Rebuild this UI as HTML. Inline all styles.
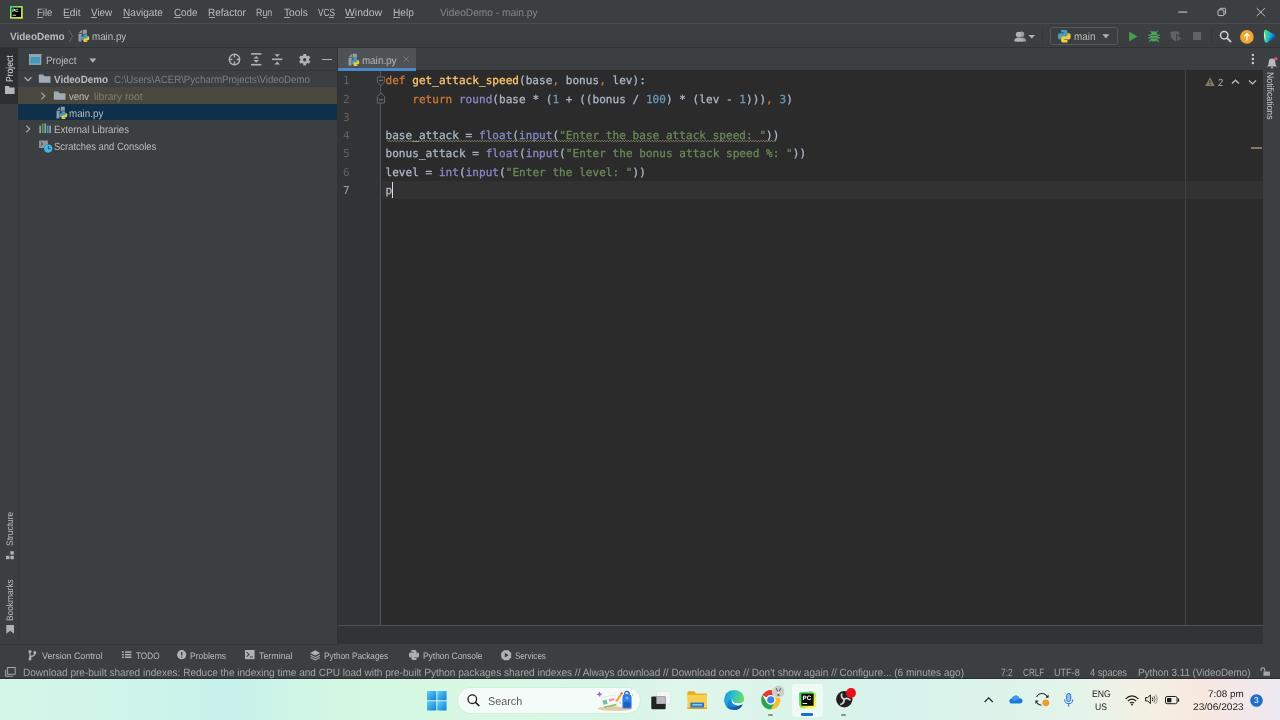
<!DOCTYPE html>
<html lang="en">
<head>
<meta charset="utf-8">
<title>VideoDemo - main.py</title>
<style>
html,body{margin:0;padding:0}
body{width:1280px;height:720px;position:relative;overflow:hidden;background:#3c3f41;font-family:"Liberation Sans",sans-serif;text-rendering:geometricPrecision}
.b{position:absolute}
.t{position:absolute;white-space:pre;display:block;transform-origin:0 0}
svg{position:absolute;overflow:visible}
.code{position:absolute;left:385.5px;white-space:pre;font:400 11.04px/18px "DejaVu Sans Mono","Liberation Mono",monospace;color:#a9b7c6;letter-spacing:0.034px;height:18px;-webkit-text-stroke:0.3px}
.us{position:relative;top:-1.6px}
u{text-decoration:underline;text-decoration-thickness:0.8px;text-underline-offset:1.2px;text-decoration-color:#9a9c9e}
.k{color:#cc7832}.f{color:#ffc66d}.bi{color:#8888c6}.n{color:#6897bb}.s{color:#6a8759}
.ln{position:absolute;left:343px;font:400 11.04px/18px "DejaVu Sans Mono","Liberation Mono",monospace;color:#606366;height:18px}
</style>
</head>
<body>
<div id="root" style="position:absolute;left:0;top:0;width:1280px;height:720px;will-change:transform">
<!-- menu + nav separators -->
<div class="b" style="left:0;top:23px;width:1280px;height:1px;background:#4b4e50"></div>
<div class="b" style="left:0;top:47px;width:1280px;height:1px;background:#323232"></div>

<!-- left stripe -->
<div class="b" style="left:0;top:48px;width:18px;height:56px;background:#2d2f30"></div>
<div class="b" style="left:17.5px;top:48px;width:1px;height:597px;background:#37393b"></div>

<!-- project panel -->
<div class="b" style="left:18px;top:70px;width:320px;height:1px;background:#35383a"></div>
<div class="b" style="left:18px;top:87px;width:319.5px;height:16.7px;background:#4a483e"></div>
<div class="b" style="left:18px;top:103.7px;width:319.5px;height:16.8px;background:#0e304a"></div>
<div class="b" style="left:337.3px;top:48px;width:1px;height:597px;background:#323232"></div>

<!-- editor tabs -->
<div class="b" style="left:338px;top:47.6px;width:78.2px;height:22.7px;background:#4e5254"></div>

<!-- editor -->
<div class="b" style="left:338px;top:70.3px;width:925px;height:555.2px;background:#2b2b2b"></div>
<div class="b" style="left:338px;top:70.3px;width:43px;height:555.2px;background:#313335"></div>
<div class="b" style="left:380.3px;top:70.3px;width:1px;height:555.2px;background:#555555"></div>
<div class="b" style="left:381.5px;top:181px;width:881.5px;height:18.3px;background:#323232"></div>
<div class="b" style="left:1185px;top:70.3px;width:1px;height:555.2px;background:#424242"></div>
<div class="b" style="left:338px;top:625.3px;width:925px;height:1px;background:#4f5153"></div>
<div class="b" style="left:338px;top:626.3px;width:925px;height:18px;background:#313335"></div>
<div class="b" style="left:338px;top:67.6px;width:78.2px;height:3px;background:#4a88c7"></div>
<!-- right stripe -->
<div class="b" style="left:1263px;top:48px;width:17px;height:597px;background:#3c3f41"></div>
<!-- error stripe mark -->
<div class="b" style="left:1250.5px;top:147px;width:11.5px;height:2.4px;background:#857a5e"></div>

<!-- code -->
<div class="ln" style="top:72px;color:#606366">1</div>
<div class="code" style="top:72px"><span class="k">def </span><span class="f">get_attack_speed</span>(base<span class="k">,</span> bonus<span class="k">,</span> lev):</div>
<div class="ln" style="top:91px;color:#606366">2</div>
<div class="code" style="top:91px">    <span class="k">return </span><span class="bi">round</span>(base * (<span class="n">1</span> + ((bonus / <span class="n">100</span>) * (lev - <span class="n">1</span>)))<span class="k">,</span> <span class="n">3</span>)</div>
<div class="ln" style="top:109px;color:#606366">3</div>
<div class="ln" style="top:127px;color:#606366">4</div>
<div class="code" style="top:127px"><span class="wv">base_attack = <span class="bi">float</span>(<span class="bi">input</span>(<span class="s">"Enter the base attack speed: "</span>))</span></div>
<div class="ln" style="top:145px;color:#606366">5</div>
<div class="code" style="top:145px">bonus_attack = <span class="bi">float</span>(<span class="bi">input</span>(<span class="s">"Enter the bonus attack speed %: "</span>))</div>
<div class="ln" style="top:164px;color:#606366">6</div>
<div class="code" style="top:164px">level = <span class="bi">int</span>(<span class="bi">input</span>(<span class="s">"Enter the level: "</span>))</div>
<div class="ln" style="top:182px;color:#a4a3a3">7</div>
<div class="code" style="top:182px">p</div>

<!-- bottom tool stripe / status bar -->
<div class="b" style="left:0;top:644.3px;width:1280px;height:35px;background:#3c3f41"></div>

<div class="b" style="left:0;top:643.8px;width:338px;height:1px;background:#323537"></div>
<div class="b" style="left:0;top:678.4px;width:1280px;height:1px;background:#2a2c2d"></div>
<!-- taskbar -->
<div class="b" style="left:0;top:679.4px;width:1280px;height:40.6px;background:linear-gradient(90deg,#d3f6e8 0%,#d0f5e9 8%,#c9f1ec 18%,#d3f8e2 27%,#d9f8e3 38%,#d6f5e6 48%,#dff6ea 53%,#dbf4ea 62%,#d8f3ec 70%,#dcf4eb 77%,#e4f4ea 84%,#f3f1e4 89%,#f8e8e0 94%,#f1e8ec 98%,#ece9f0 100%)"></div>
<div class="b" style="left:458px;top:687.5px;width:182px;height:25.3px;border-radius:13px;background:#f5fbf8;box-shadow:0 0 0 0.6px rgba(0,0,0,0.06)"></div>
<div class="b" style="left:791.5px;top:684px;width:31.3px;height:32.5px;border-radius:3px;background:rgba(255,255,255,0.55)"></div>

<svg style="left:10.4px;top:5.9px" width="12.7" height="12.7" viewBox="0 0 12.7 12.7" ><defs><linearGradient id="pcg" x1="0" y1="0" x2="1" y2="1"><stop offset="0" stop-color="#21d789"/><stop offset="0.45" stop-color="#a8ec4e"/><stop offset="1" stop-color="#fcf84a"/></linearGradient></defs><rect width="12.7" height="12.7" fill="url(#pcg)"/><rect x="1.6" y="1.6" width="9.5" height="9.5" fill="#000"/><text x="2.3" y="6.2" font-family="Liberation Sans, sans-serif" font-weight="700" font-size="4.6" fill="#fff">PC</text><rect x="2.5" y="8.8" width="3.6" height="0.8" fill="#fff"/></svg>
<svg style="left:1178px;top:7px" width="12" height="12" viewBox="0 0 12 12" ><path stroke="#c8c8c8" stroke-width="1.1" d="M0.3,5.05 H9.2"/></svg>
<svg style="left:1217px;top:7px" width="12" height="12" viewBox="0 0 12 12" ><rect x="1" y="2.9" width="5.9" height="5.7" rx="1" fill="none" stroke="#c8c8c8" stroke-width="0.95"/><path fill="none" stroke="#c8c8c8" stroke-width="0.95" d="M2.7,2.7 V2.2 Q2.7,1.3 3.6,1.3 H7.6 Q8.6,1.3 8.6,2.3 V6.2 Q8.6,7.1 7.7,7.1 H7.1"/></svg>
<svg style="left:1256px;top:7px" width="12" height="12" viewBox="0 0 12 12" ><path stroke="#c8c8c8" stroke-width="0.95" d="M0.7,1.2 L8.8,9 M8.8,1.2 L0.7,9"/></svg>
<svg style="left:66px;top:29px" width="10" height="14" viewBox="0 0 10 14" ><path fill="none" stroke="#6b6d6f" stroke-width="0.8" d="M3.2,1.6 L6.6,7.2 L3.2,12.9"/></svg>
<svg style="left:76.2px;top:29.4px" width="13.33" height="13.33" viewBox="0 0 16 16" ><polygon fill="#9aa7b0" fill-opacity=".9" points="7,1 3,5 7,5"/><path fill="#9aa7b0" fill-opacity=".9" d="M8,1 H13 V5.6 H9.6 Q6.6,5.6 6.6,8.6 V15 H3 V6 H8 Z"/><g transform="translate(6.6,6.4) scale(0.93)"><path fill="#479dc8" fill-opacity="1" d="M2.5,0 H6 Q7.5,0 7.5,1.5 V4 Q7.5,5 6.5,5 H3.5 Q2.5,5 2.5,6 V7.5 H1.5 Q0,7.5 0,6 V4 Q0,2.5 1.5,2.5 H5 V2 H2.5 Z"/><path fill="#ecd042" fill-opacity="1" d="M7.5,10 H4 Q2.5,10 2.5,8.5 V6 Q2.5,5 3.5,5 H6.5 Q7.5,5 7.5,4 V2.5 H8.5 Q10,2.5 10,4 V6 Q10,7.5 8.5,7.5 H5 V8 H7.5 Z"/></g></svg>
<svg style="left:1013px;top:29px" width="24" height="14" viewBox="0 0 24 14" ><g fill="#9a9c9e"><circle cx="8.6" cy="5.2" r="2.7"/><path d="M3.6,12.4 Q3.6,8.4 8.6,8.4 Q13.2,8.4 13.2,12.4 Z"/></g><g fill="#afb1b3"><circle cx="5.6" cy="5.6" r="2.8"/><path d="M1.2,12.4 Q1.2,8.8 5.6,8.8 Q10.4,8.8 10.4,12.4 Z"/><path d="M15.4,6 H22 L18.7,9.6 Z"/></g></svg>
<div class="b" style="left:1042.3px;top:28px;width:1px;height:16px;background:#35383a"></div>
<div class="b" style="left:1050.3px;top:27.3px;width:65.6px;height:16.2px;border:0.8px solid #56595b;border-radius:2.5px"></div>
<svg style="left:1058px;top:29.8px" width="12.6" height="12.6" viewBox="0 0 10 10" ><g transform="translate(0,0) scale(1)"><path fill="#479dc8" fill-opacity="1" d="M2.5,0 H6 Q7.5,0 7.5,1.5 V4 Q7.5,5 6.5,5 H3.5 Q2.5,5 2.5,6 V7.5 H1.5 Q0,7.5 0,6 V4 Q0,2.5 1.5,2.5 H5 V2 H2.5 Z"/><path fill="#ecd042" fill-opacity="1" d="M7.5,10 H4 Q2.5,10 2.5,8.5 V6 Q2.5,5 3.5,5 H6.5 Q7.5,5 7.5,4 V2.5 H8.5 Q10,2.5 10,4 V6 Q10,7.5 8.5,7.5 H5 V8 H7.5 Z"/></g></svg>
<svg style="left:1102px;top:33px" width="8" height="7" viewBox="0 0 8 7" ><path fill="#afb1b3" d="M0.4,1.2 H7.4 L3.9,5.6 Z"/></svg>
<svg style="left:1128px;top:30px" width="11" height="13" viewBox="0 0 11 13" ><path fill="#499c54" d="M1.2,1.4 L9.4,6.4 L1.2,11.4 Z"/></svg>
<svg style="left:1148px;top:30px" width="12" height="12" viewBox="0 0 12 12" ><g fill="#4fa65d"><ellipse cx="6" cy="7" rx="3.9" ry="4.5"/><path d="M3.3,3.4 Q3.5,1.3 6,1.3 Q8.5,1.3 8.7,3.4 Z"/><path d="M2.6,0.6 L4.6,2.4 L3.8,3 L1.9,1.2 Z M9.4,0.6 L7.4,2.4 L8.2,3 L10.1,1.2 Z"/><rect x="0.4" y="4.6" width="11.2" height="1.3"/><rect x="0.2" y="7.2" width="11.6" height="1.3"/><path d="M0.8,11.2 L3,9 L3.9,9.8 L1.7,12 Z M11.2,11.2 L9,9 L8.1,9.8 L10.3,12 Z"/></g><path stroke="#3c3f41" stroke-width="0.8" stroke-opacity=".8" d="M3,5.5 H9 M2.6,8.3 H9.4"/></svg>
<svg style="left:1169px;top:30px" width="14" height="13" viewBox="0 0 14 13" ><path fill="#606365" d="M1.6,1.6 Q4,1.9 6,0.9 Q8,1.9 10.2,1.6 V5.4 L7,3.6 V11.2 Q2.6,9.6 1.6,6 Z"/><path fill="#5a5d5f" d="M7.8,5.2 L12.8,8.4 L7.8,11.6 Z"/></svg>
<div class="b" style="left:1193px;top:32px;width:8.4px;height:8.4px;background:#616365"></div>
<div class="b" style="left:1210.5px;top:28px;width:1px;height:16px;background:#34373a"></div>
<svg style="left:1219px;top:30px" width="13" height="13" viewBox="0 0 13 13" ><circle cx="5.2" cy="5.2" r="3.7" fill="none" stroke="#d0d0d0" stroke-width="1.5"/><path stroke="#d0d0d0" stroke-width="1.9" stroke-linecap="round" d="M8.1,8.1 L11.6,11.6"/></svg>
<svg style="left:1240.2px;top:29.8px" width="14" height="14" viewBox="0 0 14 14" ><circle cx="6.9" cy="6.9" r="6.8" fill="#f0a732"/><path fill="none" stroke="#fff" stroke-width="1.3" d="M6.9,10.6 V3.8 M4.2,6.4 L6.9,3.6 L9.6,6.4"/></svg>
<svg style="left:1262.6px;top:29px" width="13" height="14.4" viewBox="0 0 13 14.4" ><defs><linearGradient id="cwm" x1="0" y1="0" x2="1" y2="0.25"><stop offset="0" stop-color="#54e36a"/><stop offset="0.45" stop-color="#23c9ae"/><stop offset="1" stop-color="#0a6ff0"/></linearGradient></defs><path fill="#1d1f20" d="M0.6,0.6 L3,0.2 L2,2.4 Z"/><path fill="url(#cwm)" d="M1.3,1.4 Q1.8,0.1 3.4,0.9 L11.4,5.7 Q12.9,6.9 11.6,8.2 L4.3,13.4 Q2.6,14.3 1.8,12.8 Q0.3,7 1.3,1.4 Z"/><path fill="#0b62d6" fill-opacity="0.8" d="M4.3,13.4 L11.6,8.2 Q12.6,7.2 11.9,6.2 L6.8,10 Z"/><path fill="#d9f8df" fill-opacity="0.9" d="M1.4,2.2 Q3.4,7 2,12.6 Q0.4,7 1.4,2.2 Z"/></svg>
<svg style="left:4.6px;top:86.2px" width="9.6" height="8" viewBox="0 0 9.6 8" ><path fill="#b4b6b8" d="M0,0 H3.8 L4.8,1.5 H9.6 V8 H0 Z"/></svg>
<svg style="left:6px;top:551px" width="8.4" height="9" viewBox="0 0 8.4 9" ><g fill="#afb1b3"><rect x="4.4" y="0.2" width="3.4" height="3.4"/><rect x="0" y="4.8" width="3.4" height="3.4"/><rect x="4.4" y="4.8" width="3.4" height="3.4"/></g></svg>
<svg style="left:5.6px;top:625px" width="8.4" height="9" viewBox="0 0 8.4 9" ><path fill="#afb1b3" d="M0.3,0 H8 V8.8 L4.15,5.8 L0.3,8.8 Z"/></svg>
<svg style="left:29.1px;top:54.2px" width="12.3" height="10.9" viewBox="0 0 12.3 10.9" ><rect x="0.7" y="0.7" width="10.9" height="9.5" fill="#3d9cbf" stroke="#97a3ab" stroke-width="1.4"/><rect x="0" y="0" width="12.3" height="3" fill="#97a3ab"/></svg>
<svg style="left:89px;top:57.5px" width="8" height="6" viewBox="0 0 8 6" ><path fill="#afb1b3" d="M0.3,0.6 H7.3 L3.8,4.8 Z"/></svg>
<svg style="left:227.5px;top:52.7px" width="13" height="13" viewBox="0 0 13 13" ><g fill="none" stroke="#afb1b3" stroke-width="1.45"><circle cx="6.5" cy="6.5" r="5.2"/><path d="M6.5,1 V4.4 M6.5,8.6 V12 M1,6.5 H4.4 M8.6,6.5 H12"/></g></svg>
<svg style="left:251px;top:53px" width="10.4" height="12.6" viewBox="0 0 10.4 12.6" ><g fill="#afb1b3"><rect x="0" y="0.1" width="10.4" height="1.6"/><rect x="0" y="10.9" width="10.4" height="1.6"/><path d="M5.2,2.9 L8,5.6 H2.4 Z"/><path d="M5.2,9.7 L8,7 H2.4 Z"/></g></svg>
<svg style="left:272px;top:53px" width="10.4" height="12.6" viewBox="0 0 10.4 12.6" ><g fill="#afb1b3"><rect x="0" y="5.5" width="10.4" height="1.6"/><path d="M5.2,3.9 L8,1.2 H2.4 Z"/><path d="M5.2,8.6 L8,11.4 H2.4 Z"/></g></svg>
<svg style="left:299.4px;top:53.8px" width="11.4" height="11.4" viewBox="-5.7 -5.7 11.4 11.4" ><g fill="#afb1b3"><rect x="-1.45" y="-5.7" width="2.9" height="3" transform="rotate(0)"/><rect x="-1.45" y="-5.7" width="2.9" height="3" transform="rotate(60)"/><rect x="-1.45" y="-5.7" width="2.9" height="3" transform="rotate(120)"/><rect x="-1.45" y="-5.7" width="2.9" height="3" transform="rotate(180)"/><rect x="-1.45" y="-5.7" width="2.9" height="3" transform="rotate(240)"/><rect x="-1.45" y="-5.7" width="2.9" height="3" transform="rotate(300)"/></g><circle r="3.05" fill="none" stroke="#afb1b3" stroke-width="2.7"/></svg>
<div class="b" style="left:321.7px;top:58.5px;width:10.3px;height:1.5px;background:#afb1b3"></div>
<svg style="left:23px;top:74px" width="10" height="10" viewBox="-5 -5 10 10" ><path fill="none" stroke="#a4a6a8" stroke-width="1.25" d="M-3.5,-1.8 L0,1.8 L3.5,-1.8"/></svg>
<svg style="left:38.2px;top:72.2px" width="13.33" height="13.33" viewBox="0 0 16 16" ><path fill="#a1abb3" fill-opacity="1" d="M1,3 H6.3 L7.8,5 H15 V13 H1 Z"/></svg>
<svg style="left:38px;top:90.6px" width="10" height="10" viewBox="-5 -5 10 10" ><path fill="none" stroke="#a4a6a8" stroke-width="1.25" d="M-1.8,-3.4 L1.7,0 L-1.8,3.4"/></svg>
<svg style="left:53.3px;top:88.9px" width="13.33" height="13.33" viewBox="0 0 16 16" ><path fill="#a1abb3" fill-opacity="1" d="M1,3 H6.3 L7.8,5 H15 V13 H1 Z"/></svg>
<svg style="left:53.7px;top:105.8px" width="13.33" height="13.33" viewBox="0 0 16 16" ><polygon fill="#9aa7b0" fill-opacity=".9" points="7,1 3,5 7,5"/><path fill="#9aa7b0" fill-opacity=".9" d="M8,1 H13 V5.6 H9.6 Q6.6,5.6 6.6,8.6 V15 H3 V6 H8 Z"/><g transform="translate(6.6,6.4) scale(0.93)"><path fill="#479dc8" fill-opacity="1" d="M2.5,0 H6 Q7.5,0 7.5,1.5 V4 Q7.5,5 6.5,5 H3.5 Q2.5,5 2.5,6 V7.5 H1.5 Q0,7.5 0,6 V4 Q0,2.5 1.5,2.5 H5 V2 H2.5 Z"/><path fill="#ecd042" fill-opacity="1" d="M7.5,10 H4 Q2.5,10 2.5,8.5 V6 Q2.5,5 3.5,5 H6.5 Q7.5,5 7.5,4 V2.5 H8.5 Q10,2.5 10,4 V6 Q10,7.5 8.5,7.5 H5 V8 H7.5 Z"/></g></svg>
<svg style="left:22.6px;top:124px" width="10" height="10" viewBox="-5 -5 10 10" ><path fill="none" stroke="#a4a6a8" stroke-width="1.25" d="M-1.8,-3.4 L1.7,0 L-1.8,3.4"/></svg>
<svg style="left:39px;top:123.4px" width="12.2" height="10.6" viewBox="0 0 13 11" ><g><rect x="0.4" y="2.6" width="1.7" height="8" fill="#9aa7b0"/><rect x="3.1" y="0.4" width="1.7" height="10.2" fill="#62b543" fill-opacity=".8"/><rect x="5.8" y="0.4" width="1.7" height="10.2" fill="#9aa7b0"/><rect x="8.4" y="2.6" width="1.7" height="8" fill="#40b6e0" fill-opacity=".8"/><rect x="11" y="2.6" width="1.7" height="8" fill="#9aa7b0"/></g></svg>
<svg style="left:39px;top:139.5px" width="14" height="13" viewBox="0 0 14 13" ><path fill="#9aa7b0" fill-opacity=".85" d="M0.1,0.5 H8.9 V4.6 Q5.6,4.8 5,8 H0.1 Z"/><path fill="none" stroke="#3c3f41" stroke-width="0.9" d="M1.6,2.2 L3.8,4 L1.6,5.8"/><circle cx="9.2" cy="8.6" r="4.1" fill="#40b6e0"/><path fill="none" stroke="#2b4a5a" stroke-width="0.9" d="M9.4,6 V8.8 H11.6"/></svg>
<svg style="left:345.5px;top:52.7px" width="13.33" height="13.33" viewBox="0 0 16 16" ><polygon fill="#9aa7b0" fill-opacity=".9" points="7,1 3,5 7,5"/><path fill="#9aa7b0" fill-opacity=".9" d="M8,1 H13 V5.6 H9.6 Q6.6,5.6 6.6,8.6 V15 H3 V6 H8 Z"/><g transform="translate(6.6,6.4) scale(0.93)"><path fill="#479dc8" fill-opacity="1" d="M2.5,0 H6 Q7.5,0 7.5,1.5 V4 Q7.5,5 6.5,5 H3.5 Q2.5,5 2.5,6 V7.5 H1.5 Q0,7.5 0,6 V4 Q0,2.5 1.5,2.5 H5 V2 H2.5 Z"/><path fill="#ecd042" fill-opacity="1" d="M7.5,10 H4 Q2.5,10 2.5,8.5 V6 Q2.5,5 3.5,5 H6.5 Q7.5,5 7.5,4 V2.5 H8.5 Q10,2.5 10,4 V6 Q10,7.5 8.5,7.5 H5 V8 H7.5 Z"/></g></svg>
<svg style="left:403px;top:56.4px" width="7" height="7" viewBox="0 0 7 7" ><path stroke="#7b7e80" stroke-width="0.85" d="M0.5,0.5 L5.9,5.9 M5.9,0.5 L0.5,5.9"/></svg>
<svg style="left:1250.7px;top:53.0px" width="4" height="11" viewBox="0 0 4 11" ><g fill="#c4c6c8"><circle cx="1.9" cy="2" r="1.25"/><circle cx="1.9" cy="6" r="1.25"/><circle cx="1.9" cy="9.9" r="1.25"/></g></svg>
<svg style="left:375.5px;top:75px" width="10" height="32" viewBox="0 0 10 32" ><path fill="#2d2e30" stroke="#74777a" stroke-width="0.8" d="M1.4,1.9 H8.6 V6.9 L5,10.7 L1.4,6.9 Z"/><path stroke="#8a8d8f" stroke-width="0.9" d="M2.9,5.3 H7.1"/><path fill="#2d2e30" stroke="#74777a" stroke-width="0.8" d="M5,17.8 L8.6,21.5 V28 H1.4 V21.5 Z"/><path stroke="#8a8d8f" stroke-width="0.9" d="M2.9,24.8 H7.1"/></svg>
<div class="b" style="left:391.5px;top:182px;width:1.6px;height:15.8px;background:#dcdcdc"></div>
<svg style="left:385.5px;top:140.4px" width="392" height="2.2" viewBox="0 0 392 2.2" ><polyline fill="none" stroke="#a09c72" stroke-width="0.75" points="0.00,0.35 1.33,1.75 2.67,0.35 4.00,1.75 5.33,0.35 6.67,1.75 8.00,0.35 9.33,1.75 10.67,0.35 12.00,1.75 13.33,0.35 14.67,1.75 16.00,0.35 17.33,1.75 18.67,0.35 20.00,1.75 21.33,0.35 22.67,1.75 24.00,0.35 25.33,1.75 26.67,0.35 28.00,1.75 29.33,0.35 30.67,1.75 32.00,0.35 33.33,1.75 34.67,0.35 36.00,1.75 37.33,0.35 38.67,1.75 40.00,0.35 41.33,1.75 42.67,0.35 44.00,1.75 45.33,0.35 46.67,1.75 48.00,0.35 49.33,1.75 50.67,0.35 52.00,1.75 53.33,0.35 54.67,1.75 56.00,0.35 57.33,1.75 58.67,0.35 60.00,1.75 61.33,0.35 62.67,1.75 64.00,0.35 65.33,1.75 66.67,0.35 68.00,1.75 69.33,0.35 70.66,1.75 72.00,0.35 73.33,1.75 74.66,0.35 76.00,1.75 77.33,0.35 78.66,1.75 80.00,0.35 81.33,1.75 82.66,0.35 84.00,1.75 85.33,0.35 86.66,1.75 88.00,0.35 89.33,1.75 90.66,0.35 92.00,1.75 93.33,0.35 94.66,1.75 96.00,0.35 97.33,1.75 98.66,0.35 100.00,1.75 101.33,0.35 102.66,1.75 104.00,0.35 105.33,1.75 106.66,0.35 108.00,1.75 109.33,0.35 110.66,1.75 112.00,0.35 113.33,1.75 114.66,0.35 116.00,1.75 117.33,0.35 118.66,1.75 120.00,0.35 121.33,1.75 122.66,0.35 124.00,1.75 125.33,0.35 126.66,1.75 128.00,0.35 129.33,1.75 130.66,0.35 132.00,1.75 133.33,0.35 134.66,1.75 136.00,0.35 137.33,1.75 138.66,0.35 140.00,1.75 141.33,0.35 142.66,1.75 144.00,0.35 145.33,1.75 146.66,0.35 148.00,1.75 149.33,0.35 150.66,1.75 152.00,0.35 153.33,1.75 154.66,0.35 156.00,1.75 157.33,0.35 158.66,1.75 160.00,0.35 161.33,1.75 162.66,0.35 164.00,1.75 165.33,0.35 166.66,1.75 168.00,0.35 169.33,1.75 170.66,0.35 172.00,1.75 173.33,0.35 174.66,1.75 176.00,0.35 177.33,1.75 178.66,0.35 180.00,1.75 181.33,0.35 182.66,1.75 184.00,0.35 185.33,1.75 186.66,0.35 188.00,1.75 189.33,0.35 190.66,1.75 192.00,0.35 193.33,1.75 194.66,0.35 196.00,1.75 197.33,0.35 198.66,1.75 200.00,0.35 201.33,1.75 202.66,0.35 203.99,1.75 205.33,0.35 206.66,1.75 207.99,0.35 209.33,1.75 210.66,0.35 211.99,1.75 213.33,0.35 214.66,1.75 215.99,0.35 217.33,1.75 218.66,0.35 219.99,1.75 221.33,0.35 222.66,1.75 223.99,0.35 225.33,1.75 226.66,0.35 227.99,1.75 229.33,0.35 230.66,1.75 231.99,0.35 233.33,1.75 234.66,0.35 235.99,1.75 237.33,0.35 238.66,1.75 239.99,0.35 241.33,1.75 242.66,0.35 243.99,1.75 245.33,0.35 246.66,1.75 247.99,0.35 249.33,1.75 250.66,0.35 251.99,1.75 253.33,0.35 254.66,1.75 255.99,0.35 257.33,1.75 258.66,0.35 259.99,1.75 261.33,0.35 262.66,1.75 263.99,0.35 265.33,1.75 266.66,0.35 267.99,1.75 269.33,0.35 270.66,1.75 271.99,0.35 273.33,1.75 274.66,0.35 275.99,1.75 277.33,0.35 278.66,1.75 279.99,0.35 281.33,1.75 282.66,0.35 283.99,1.75 285.33,0.35 286.66,1.75 287.99,0.35 289.33,1.75 290.66,0.35 291.99,1.75 293.33,0.35 294.66,1.75 295.99,0.35 297.33,1.75 298.66,0.35 299.99,1.75 301.33,0.35 302.66,1.75 303.99,0.35 305.33,1.75 306.66,0.35 307.99,1.75 309.33,0.35 310.66,1.75 311.99,0.35 313.33,1.75 314.66,0.35 315.99,1.75 317.33,0.35 318.66,1.75 319.99,0.35 321.33,1.75 322.66,0.35 323.99,1.75 325.33,0.35 326.66,1.75 327.99,0.35 329.33,1.75 330.66,0.35 331.99,1.75 333.33,0.35 334.66,1.75 335.99,0.35 337.32,1.75 338.66,0.35 339.99,1.75 341.32,0.35 342.66,1.75 343.99,0.35 345.32,1.75 346.66,0.35 347.99,1.75 349.32,0.35 350.66,1.75 351.99,0.35 353.32,1.75 354.66,0.35 355.99,1.75 357.32,0.35 358.66,1.75 359.99,0.35 361.32,1.75 362.66,0.35 363.99,1.75 365.32,0.35 366.66,1.75 367.99,0.35 369.32,1.75 370.66,0.35 371.99,1.75 373.32,0.35 374.66,1.75 375.99,0.35 377.32,1.75 378.66,0.35 379.99,1.75 381.32,0.35 382.66,1.75 383.99,0.35 385.32,1.75 386.66,0.35 387.99,1.75 389.32,0.35 390.66,1.75"/></svg>
<svg style="left:1204.8px;top:77px" width="10" height="9.4" viewBox="0 0 10 9.4" ><path fill="#857c5e" d="M5,0.3 L9.8,9 H0.2 Z"/><path stroke="#2b2b2b" stroke-width="1.1" d="M5,3.2 V6.2 M5,7 V8.1"/></svg>
<svg style="left:1230.9px;top:78.3px" width="9" height="8" viewBox="0 0 9 8" ><path fill="none" stroke="#b9bbbd" stroke-width="1.35" d="M1,5.6 L4.5,2.2 L8,5.6"/></svg>
<svg style="left:1248.2px;top:78.1px" width="9" height="8" viewBox="0 0 9 8" ><path fill="none" stroke="#b9bbbd" stroke-width="1.35" d="M1,2.4 L4.5,5.9 L8,2.4"/></svg>
<svg style="left:1266.8px;top:57px" width="11" height="12" viewBox="0 0 11 12" ><path fill="#b8babc" d="M5,1.4 Q8.3,1.6 8.3,5.4 Q8.3,7.8 9.8,9 V9.6 H0.2 V9 Q1.7,7.8 1.7,5.4 Q1.7,1.6 5,1.4 Z"/><rect x="4" y="10.2" width="2" height="1.2" fill="#b8babc"/><circle cx="8.8" cy="1.8" r="1.7" fill="#dc566a"/></svg>
<svg style="left:28px;top:649.6px" width="9" height="11" viewBox="0 0 9 11" ><g fill="none" stroke="#afb1b3" stroke-width="1.3"><path d="M2,1.2 V9.6"/><path d="M6.8,2.6 V3.6 Q6.8,5.6 4.6,6 Q2,6.4 2,8.2"/></g><g fill="#afb1b3"><circle cx="2" cy="1.6" r="1.5"/><circle cx="2" cy="9" r="1.5"/><circle cx="6.8" cy="2.4" r="1.5"/></g></svg>
<svg style="left:122px;top:650.8px" width="10" height="8" viewBox="0 0 10 8" ><g fill="#afb1b3"><rect x="0" y="0.3" width="1.8" height="1.5"/><rect x="3" y="0.3" width="6.4" height="1.5"/><rect x="0" y="2.9" width="1.8" height="1.5"/><rect x="3" y="2.9" width="6.4" height="1.5"/><rect x="0" y="5.5" width="1.8" height="1.5"/><rect x="3" y="5.5" width="6.4" height="1.5"/></g></svg>
<svg style="left:176.6px;top:649.8px" width="9.4" height="9.4" viewBox="0 0 9.4 9.4" ><circle cx="4.7" cy="4.7" r="4.6" fill="#afb1b3"/><path stroke="#3c3f41" stroke-width="1.3" d="M4.7,2 V5.4 M4.7,6.4 V7.6"/></svg>
<svg style="left:244.5px;top:650px" width="9.6" height="9.2" viewBox="0 0 9.6 9.2" ><rect width="9.6" height="9.2" fill="#afb1b3"/><path fill="none" stroke="#3c3f41" stroke-width="1.1" d="M1.6,2.2 L4,4.4 L1.6,6.6 M4.8,7 H8"/></svg>
<svg style="left:310.3px;top:649.6px" width="10.4" height="10.6" viewBox="0 0 10.4 10.6" ><path fill="#afb1b3" d="M5.2,0.2 L10.2,2.9 L5.2,5.6 L0.2,2.9 Z"/><path fill="none" stroke="#afb1b3" stroke-width="1.1" d="M0.6,5.2 L5.2,7.7 L9.8,5.2 M0.6,7.5 L5.2,10 L9.8,7.5"/></svg>
<svg style="left:409px;top:649.8px" width="10" height="10" viewBox="0 0 10 10" ><g transform="translate(0,0) scale(1)"><path fill="#afb1b3" fill-opacity="1" d="M2.5,0 H6 Q7.5,0 7.5,1.5 V4 Q7.5,5 6.5,5 H3.5 Q2.5,5 2.5,6 V7.5 H1.5 Q0,7.5 0,6 V4 Q0,2.5 1.5,2.5 H5 V2 H2.5 Z"/><path fill="#afb1b3" fill-opacity="1" d="M7.5,10 H4 Q2.5,10 2.5,8.5 V6 Q2.5,5 3.5,5 H6.5 Q7.5,5 7.5,4 V2.5 H8.5 Q10,2.5 10,4 V6 Q10,7.5 8.5,7.5 H5 V8 H7.5 Z"/></g></svg>
<svg style="left:500.6px;top:649.6px" width="10.4" height="10.4" viewBox="0 0 10.4 10.4" ><path fill="#afb1b3" d="M3,0.2 H7.4 L10.2,3 V7.4 L7.4,10.2 H3 L0.2,7.4 V3 Z"/><path fill="#3c3f41" d="M3.8,2.8 L7.6,5.2 L3.8,7.6 Z"/></svg>
<svg style="left:4.8px;top:667px" width="11" height="10" viewBox="0 0 11 10" ><g fill="none" stroke="#a4a6a8" stroke-width="1"><rect x="2.6" y="0.5" width="7.6" height="6.8"/><path d="M0.6,2.6 V9.2 H8"/></g></svg>
<svg style="left:1259.6px;top:667px" width="11" height="9.4" viewBox="0 0 11 9.4" ><rect x="3.4" y="4.5" width="6.5" height="4.3" fill="#a4a6a8"/><path fill="none" stroke="#a4a6a8" stroke-width="1.1" d="M4.7,4.5 V2.7 Q4.7,0.9 2.85,0.9 Q1,0.9 1,2.7 V4"/></svg>
<svg style="left:426.6px;top:690.7px" width="19.6" height="19.4" viewBox="0 0 19.6 19.4" ><defs><linearGradient id="wl" x1="0" y1="0" x2="1" y2="1"><stop offset="0" stop-color="#5fd0f6"/><stop offset="1" stop-color="#0f7fd6"/></linearGradient></defs><g fill="url(#wl)"><rect x="0" y="0" width="9.3" height="9.2" rx="0.6"/><rect x="10.3" y="0" width="9.3" height="9.2" rx="0.6"/><rect x="0" y="10.2" width="9.3" height="9.2" rx="0.6"/><rect x="10.3" y="10.2" width="9.3" height="9.2" rx="0.6"/></g></svg>
<svg style="left:467px;top:694.4px" width="13" height="12.4" viewBox="0 0 13 12.4" ><circle cx="5.3" cy="5.2" r="4.3" fill="none" stroke="#1e1e1e" stroke-width="1.3"/><path stroke="#1e1e1e" stroke-width="1.5" stroke-linecap="round" d="M8.5,8.4 L11.9,11.6"/></svg>
<svg style="left:596px;top:690px" width="40" height="21" viewBox="0 0 40 21" ><ellipse cx="19" cy="18.6" rx="17.5" ry="2.2" fill="#e5c9a6"/><path fill="#fdfdfd" stroke="#c9d5cf" stroke-width="0.5" d="M5.6,7.6 L18.6,5 L21,15.6 L8,18.4 Z"/><path fill="#6ec2a0" d="M6.6,10.4 L10.6,9.6 L11.6,14 L7.6,14.8 Z"/><path fill="#e9a0b5" d="M12.6,9 L18,8 L18.6,10.6 L13.2,11.8 Z"/><path fill="#8fbf6a" d="M8,16.4 L20,13.8 L20.4,15.6 L8.4,18.2 Z"/><path fill="#f2a23a" d="M19.4,10.8 L24.4,3.4 L26.2,4.6 L21.2,12 Z"/><path fill="#e4553f" d="M24.4,3.4 L25.4,2 L27.2,3.2 L26.2,4.6 Z"/><path fill="#a35bd6" d="M3.4,1.4 L4.4,3.4 L6.6,4 L4.6,5 L4,7.2 L2.8,5.2 L0.6,4.8 L2.4,3.6 Z"/><circle cx="36.6" cy="5" r="0.8" fill="#f0b43c"/><circle cx="24.2" cy="13" r="0.7" fill="#53c3d9"/><path fill="none" stroke="#1d5fc4" stroke-width="1.2" d="M28.6,4.6 Q28.6,1.4 31,1.4 Q33.4,1.4 33.4,4.6"/><path fill="#2f7de1" d="M26.4,8 Q26.4,3.8 31,3.8 Q35.6,3.8 35.6,8 V17 Q35.6,18.6 34,18.6 H28 Q26.4,18.6 26.4,17 Z"/><path fill="#1b5fc4" d="M27.6,13.4 Q27.6,11.4 31,11.4 Q34.4,11.4 34.4,13.4 V17.6 H27.6 Z"/><circle cx="31" cy="8" r="1.5" fill="#7db5f5"/></svg>
<svg style="left:650.5px;top:690.6px" width="20" height="19" viewBox="0 0 20 19" ><rect x="5.4" y="0.3" width="14.2" height="12.6" rx="1.2" fill="#f4f6f6" stroke="#d5dbd9" stroke-width="0.5"/><rect x="0.3" y="5.4" width="14.4" height="12.8" rx="1.2" fill="#222424"/><rect x="5.4" y="5.4" width="9.3" height="7.5" fill="#b9bcbc"/></svg>
<svg style="left:687px;top:691px" width="20.4" height="18.2" viewBox="0 0 20.4 18.2" ><path fill="#e8a91e" d="M0.4,1.6 Q0.4,0.3 1.7,0.3 H7 L9.2,2.4 H18.6 Q20,2.4 20,3.8 V6 H0.4 Z"/><rect x="0.4" y="3.8" width="19.6" height="14" rx="1.3" fill="#f9cf4e"/><rect x="3.4" y="11.6" width="13.6" height="6.2" fill="#2479d0"/><rect x="5.4" y="13" width="9.6" height="1.7" fill="#8cc2f2"/><rect x="0.4" y="16.4" width="19.6" height="1.5" fill="#dea520"/></svg>
<svg style="left:723.8px;top:689.6px" width="20.4" height="20.2" viewBox="0 0 20.4 20.2" ><defs><linearGradient id="eg1" x1="0" y1="0" x2="0.8" y2="1"><stop offset="0" stop-color="#1fa3e3"/><stop offset="0.6" stop-color="#1573c6"/><stop offset="1" stop-color="#0b4c98"/></linearGradient><linearGradient id="eg2" x1="0" y1="0.3" x2="1" y2="0.5"><stop offset="0" stop-color="#1f97de"/><stop offset="0.42" stop-color="#2cc0cc"/><stop offset="1" stop-color="#6fe05a"/></linearGradient></defs><path fill="url(#eg1)" d="M0.3,10.4 Q0.6,5 4.8,2.4 Q6.6,6 8.4,7 Q7,8.6 7.6,11 Q9,15.4 13.6,15.4 Q16.6,15.2 19,14 Q16.4,20.2 10.2,20.1 Q1.2,19.8 0.3,10.4 Z"/><path fill="url(#eg2)" d="M0.3,10.6 Q0.4,0.4 10.2,0.1 Q19.6,0.6 20.2,9 Q20.2,12.6 16.6,13 Q12,13.4 9.6,12.6 Q7.6,11.6 8.2,9.2 Q5,9 3.6,12.4 Q2.6,16 4.4,18 Q0.4,15.6 0.3,10.6 Z"/><path fill="#1a86d4" d="M3.6,12.4 Q5,9 8.2,9.2 Q7.2,10 7.6,11 Q9,15.4 13.6,15.4 Q9.6,18.4 5.8,16.4 Q3.2,14.8 3.6,12.4 Z"/><path fill="#effbf7" d="M8.2,9.2 Q7.6,11.6 9.6,12.6 Q12,13.4 16.6,13 Q18,13.4 19,14 Q16.6,15.2 13.6,15.4 Q9,15.4 7.6,11 Q7.5,10 8.2,9.2 Z"/></svg>
<svg style="left:760.8px;top:690.2px" width="19.6" height="19.6" viewBox="-9.8 -9.8 19.6 19.6" ><circle r="9.7" fill="#fff"/><path fill="#e33b2e" d="M-8.4,-4.85 A9.7,9.7 0 0 1 8.4,-4.85 L0,-4.85 A4.85,4.85 0 0 0 -4.2,-2.42 Z"/><path fill="#f7c02c" d="M8.4,-4.85 A9.7,9.7 0 0 1 0,9.7 L4.2,2.42 A4.85,4.85 0 0 0 4.2,-2.42 L0,-4.85 Z" /><path fill="#2da44e" d="M0,9.7 A9.7,9.7 0 0 1 -8.4,-4.85 L-4.2,2.42 A4.85,4.85 0 0 0 4.2,2.42 Z"/><circle r="4.5" fill="#fff"/><circle r="3.6" fill="#3c7fe6"/></svg>
<svg style="left:772px;top:685.4px" width="13" height="13" viewBox="0 0 13 13" ><circle cx="6.5" cy="6.5" r="6.2" fill="#c9cfd1" stroke="#eef3f1" stroke-width="0.6"/><path fill="#6b5d4d" d="M4.6,3 L6.4,6.4 L8.4,3 L9.2,3.4 L7.2,7.4 L7.4,11 H5.6 L5.6,7.4 L3.8,3.4 Z"/><circle cx="6.5" cy="7.4" r="1.5" fill="#e8ddd0"/></svg>
<div class="b" style="left:768px;top:713.5px;width:5px;height:2.2px;border-radius:1.1px;background:#80958c"></div>
<svg style="left:799px;top:691.1px" width="17.4" height="17.8" viewBox="0 0 17.4 17.8" ><defs><linearGradient id="pcg2" x1="0" y1="0" x2="1" y2="1"><stop offset="0" stop-color="#17c964"/><stop offset="0.45" stop-color="#7fe04c"/><stop offset="0.75" stop-color="#f3f346"/><stop offset="1" stop-color="#fcf84a"/></linearGradient></defs><path fill="url(#pcg2)" d="M0.2,1.4 L13,0.2 L17.2,3.6 V15.4 L13.4,17.6 H2 L0.2,14.6 Z"/><rect x="2.4" y="2.6" width="12.2" height="12.2" fill="#0b0b0b"/><text x="3.5" y="9" font-family="Liberation Sans, sans-serif" font-weight="700" font-size="6.3" fill="#fff">PC</text><rect x="3.6" y="12" width="4.6" height="0.9" fill="#fff"/></svg>
<div class="b" style="left:800.9px;top:713.3px;width:12.6px;height:2.6px;border-radius:1.3px;background:#1a6fcb"></div>
<svg style="left:835.8px;top:691.4px" width="16.6" height="16.6" viewBox="-8.3 -8.3 16.6 16.6" ><circle r="8.2" fill="#231f20"/><g fill="none" stroke="#d6d6d6" stroke-width="1.7" stroke-linecap="round"><path d="M-0.2,0.2 Q-3.6,-1.6 -2.6,-5.2"/><path d="M-0.2,0.2 Q3,-2 5.6,0.6"/><path d="M-0.2,0.2 Q0,4 -3.4,5"/></g></svg>
<svg style="left:846.4px;top:687.6px" width="10" height="10" viewBox="0 0 10 10" ><circle cx="5" cy="5" r="4.95" fill="#ea0f1b"/></svg>
<div class="b" style="left:841.4px;top:713.5px;width:5px;height:2.2px;border-radius:1.1px;background:#80958c"></div>
<svg style="left:984px;top:697px" width="10" height="6" viewBox="0 0 10 6" ><path fill="none" stroke="#1e1e1e" stroke-width="1.1" d="M0.6,5 L4.7,0.9 L8.8,5"/></svg>
<svg style="left:1008.6px;top:695.4px" width="14" height="9" viewBox="0 0 14 9" ><path fill="#1d7ad6" d="M3.4,8.6 Q0.2,8.4 0.3,5.8 Q0.5,3.6 2.8,3.4 Q4,0.4 7,0.6 Q9.6,0.8 10.4,3.2 Q13.6,3.4 13.6,6 Q13.6,8.4 11,8.6 Z"/><path fill="#3f9bea" d="M2.8,3.4 Q4,0.4 7,0.6 Q9.6,0.8 10.4,3.2 L5.4,6.2 Z"/></svg>
<svg style="left:1034.6px;top:692.4px" width="15" height="15.4" viewBox="0 0 15 15.4" ><g fill="none" stroke="#2a2a2a" stroke-width="1.1"><path d="M12.4,5.4 A5.8,5.8 0 0 0 1.6,5"/><path d="M1.2,9.2 A5.8,5.8 0 0 0 6.4,13.2"/></g><path fill="#2a2a2a" d="M10.4,5.8 H13.6 V2.4 Z M3.6,8.6 H0.4 V12 Z"/><circle cx="10.8" cy="10.8" r="3.4" fill="#f09a2a"/></svg>
<svg style="left:1064.2px;top:692.8px" width="9.4" height="14.2" viewBox="0 0 9.4 14.2" ><rect x="2.7" y="0.5" width="4" height="8" rx="2" fill="#1f6fd0" fill-opacity=".35" stroke="#1f6fd0" stroke-width="1"/><path fill="none" stroke="#1f6fd0" stroke-width="1" d="M0.6,6.4 Q0.6,10.6 4.7,10.6 Q8.8,10.6 8.8,6.4 M4.7,10.6 V13.8"/></svg>
<svg style="left:1125px;top:694.6px" width="14" height="10.4" viewBox="0 0 14 10.4" ><g fill="none" stroke="#1e1e1e" stroke-width="1.15"><path d="M0.6,3.9 Q7,-2.2 13.4,3.9"/><path d="M2.8,6.1 Q7,2.2 11.2,6.1"/><path d="M4.9,8.2 Q7,6.3 9.1,8.2"/></g><circle cx="7" cy="9.5" r="0.95" fill="#1e1e1e"/></svg>
<svg style="left:1145px;top:694.4px" width="13" height="10.6" viewBox="0 0 13 10.6" ><path fill="none" stroke="#1e1e1e" stroke-width="1" d="M0.6,3.6 H2.6 L5.4,1 V9.6 L2.6,7 H0.6 Z"/><g fill="none" stroke="#1e1e1e" stroke-width="0.95"><path d="M7.2,3.4 Q8.6,5.3 7.2,7.2"/><path d="M8.9,1.9 Q11.2,5.3 8.9,8.7" stroke-opacity=".7"/><path d="M10.6,0.6 Q13.8,5.3 10.6,10" stroke-opacity=".45"/></g></svg>
<svg style="left:1165px;top:695.8px" width="14.4" height="8.2" viewBox="0 0 14.4 8.2" ><rect x="0.5" y="0.5" width="11.6" height="7.2" rx="1.6" fill="none" stroke="#1e1e1e" stroke-width="1"/><rect x="2" y="2" width="4.4" height="4.2" rx="0.6" fill="#1e1e1e"/><path stroke="#1e1e1e" stroke-width="1.3" stroke-linecap="round" d="M13.5,3 V5.2"/></svg>
<svg style="left:1250px;top:693.6px" width="13" height="13" viewBox="0 0 13 13" ><circle cx="6.5" cy="6.5" r="6.3" fill="#1f6fc5"/></svg>
<span class="t" style="left:37.20px;top:5px;font:400 10.5px/16px 'Liberation Sans', sans-serif;color:#bbbbbb;transform:scaleX(0.9042);">File</span>
<div class="b" style="left:37.40px;top:16.9px;width:5.51px;height:0.8px;background:#a2a4a6"></div>
<span class="t" style="left:63.40px;top:5px;font:400 10.5px/16px 'Liberation Sans', sans-serif;color:#bbbbbb;transform:scaleX(0.9727);">Edit</span>
<div class="b" style="left:63.60px;top:16.9px;width:6.52px;height:0.8px;background:#a2a4a6"></div>
<span class="t" style="left:90.80px;top:5px;font:400 10.5px/16px 'Liberation Sans', sans-serif;color:#bbbbbb;transform:scaleX(0.9390);">View</span>
<div class="b" style="left:91.00px;top:16.9px;width:6.29px;height:0.8px;background:#a2a4a6"></div>
<span class="t" style="left:123.20px;top:5px;font:400 10.5px/16px 'Liberation Sans', sans-serif;color:#bbbbbb;transform:scaleX(0.9601);">Navigate</span>
<div class="b" style="left:123.40px;top:16.9px;width:6.99px;height:0.8px;background:#a2a4a6"></div>
<span class="t" style="left:174.00px;top:5px;font:400 10.5px/16px 'Liberation Sans', sans-serif;color:#bbbbbb;transform:scaleX(0.9319);">Code</span>
<div class="b" style="left:174.20px;top:16.9px;width:6.78px;height:0.8px;background:#a2a4a6"></div>
<span class="t" style="left:208.30px;top:5px;font:400 10.5px/16px 'Liberation Sans', sans-serif;color:#bbbbbb;transform:scaleX(0.9550);">Refactor</span>
<div class="b" style="left:208.50px;top:16.9px;width:6.95px;height:0.8px;background:#a2a4a6"></div>
<span class="t" style="left:256.20px;top:5px;font:400 10.5px/16px 'Liberation Sans', sans-serif;color:#bbbbbb;transform:scaleX(0.8461);">Run</span>
<div class="b" style="left:262.82px;top:16.9px;width:4.64px;height:0.8px;background:#a2a4a6"></div>
<span class="t" style="left:283.70px;top:5px;font:400 10.5px/16px 'Liberation Sans', sans-serif;color:#bbbbbb;transform:scaleX(0.9708);">Tools</span>
<div class="b" style="left:283.90px;top:16.9px;width:5.93px;height:0.8px;background:#a2a4a6"></div>
<span class="t" style="left:317.50px;top:5px;font:400 10.5px/16px 'Liberation Sans', sans-serif;color:#bbbbbb;transform:scaleX(0.7873);">VCS</span>
<div class="b" style="left:329.19px;top:16.9px;width:5.21px;height:0.8px;background:#a2a4a6"></div>
<span class="t" style="left:345.00px;top:5px;font:400 10.5px/16px 'Liberation Sans', sans-serif;color:#bbbbbb;transform:scaleX(0.9904);">Window</span>
<div class="b" style="left:345.20px;top:16.9px;width:9.53px;height:0.8px;background:#a2a4a6"></div>
<span class="t" style="left:393.00px;top:5px;font:400 10.5px/16px 'Liberation Sans', sans-serif;color:#bbbbbb;transform:scaleX(0.9625);">Help</span>
<div class="b" style="left:393.20px;top:16.9px;width:7.01px;height:0.8px;background:#a2a4a6"></div>
<span class="t" style="left:440.00px;top:5px;font:400 10.5px/16px 'Liberation Sans', sans-serif;color:#85888a;transform:scaleX(0.9674);">VideoDemo - main.py</span>
<span class="t" style="left:9.80px;top:29px;font:700 10.5px/16px 'Liberation Sans', sans-serif;color:#bbbbbb;transform:scaleX(0.9500);">VideoDemo</span>
<span class="t" style="left:92.30px;top:29px;font:400 10.5px/16px 'Liberation Sans', sans-serif;color:#bbbbbb;transform:scaleX(0.9302);">main.py</span>
<span class="t" style="left:45.60px;top:53px;font:400 10.5px/16px 'Liberation Sans', sans-serif;color:#bbbbbb;transform:scaleX(0.9300);">Project</span>
<span class="t" style="left:54.40px;top:72px;font:700 10.5px/16px 'Liberation Sans', sans-serif;color:#bbbbbb;transform:scaleX(0.9379);">VideoDemo</span>
<span class="t" style="left:113.80px;top:72px;font:400 10.5px/16px 'Liberation Sans', sans-serif;color:#7d7f80;transform:scaleX(0.9206);">C:\Users\ACER\PycharmProjects\VideoDemo</span>
<span class="t" style="left:69.40px;top:89px;font:400 10.5px/16px 'Liberation Sans', sans-serif;color:#bbbbbb;transform:scaleX(0.9059);">venv</span>
<span class="t" style="left:94.30px;top:89px;font:400 10.5px/16px 'Liberation Sans', sans-serif;color:#7f7d72;transform:scaleX(0.9817);">library root</span>
<span class="t" style="left:69.40px;top:106px;font:400 10.5px/16px 'Liberation Sans', sans-serif;color:#bbbbbb;transform:scaleX(0.9329);">main.py</span>
<span class="t" style="left:54.40px;top:122px;font:400 10.5px/16px 'Liberation Sans', sans-serif;color:#bbbbbb;transform:scaleX(0.9180);">External Libraries</span>
<span class="t" style="left:54.40px;top:139px;font:400 10.5px/16px 'Liberation Sans', sans-serif;color:#bbbbbb;transform:scaleX(0.8978);">Scratches and Consoles</span>
<span class="t" style="left:362.25px;top:53px;font:400 10.5px/16px 'Liberation Sans', sans-serif;color:#bbbbbb;transform:scaleX(0.9384);">main.py</span>
<span class="t" style="left:1074.40px;top:29px;font:400 10.5px/16px 'Liberation Sans', sans-serif;color:#bbbbbb;transform:scaleX(0.9400);">main</span>
<span class="t" style="left:1217.70px;top:75px;font:400 10.5px/16px 'Liberation Sans', sans-serif;color:#b2b6ba;transform:scaleX(0.8898);">2</span>
<span class="t" style="left:42.00px;top:648px;font:400 9.4px/16px 'Liberation Sans', sans-serif;color:#bbbbbb;transform:scaleX(0.9437);">Version Control</span>
<span class="t" style="left:135.50px;top:648px;font:400 9.4px/16px 'Liberation Sans', sans-serif;color:#bbbbbb;transform:scaleX(0.8729);">TODO</span>
<span class="t" style="left:190.00px;top:648px;font:400 9.4px/16px 'Liberation Sans', sans-serif;color:#bbbbbb;transform:scaleX(0.9089);">Problems</span>
<span class="t" style="left:258.80px;top:648px;font:400 9.4px/16px 'Liberation Sans', sans-serif;color:#bbbbbb;transform:scaleX(0.9453);">Terminal</span>
<span class="t" style="left:324.00px;top:648px;font:400 9.4px/16px 'Liberation Sans', sans-serif;color:#bbbbbb;transform:scaleX(0.8798);">Python Packages</span>
<span class="t" style="left:422.50px;top:648px;font:400 9.4px/16px 'Liberation Sans', sans-serif;color:#bbbbbb;transform:scaleX(0.8987);">Python Console</span>
<span class="t" style="left:515.30px;top:648px;font:400 9.4px/16px 'Liberation Sans', sans-serif;color:#bbbbbb;transform:scaleX(0.8595);">Services</span>
<span class="t" style="left:23.00px;top:665px;font:400 10.5px/16px 'Liberation Sans', sans-serif;color:#a4a6a7;transform:scaleX(0.9560);">Download pre-built shared indexes: Reduce the indexing time and CPU load with pre-built Python packages shared indexes // Always download // Download once // Don't show again // Configure... (6 minutes ago)</span>
<span class="t" style="left:1000.75px;top:665px;font:400 10.5px/16px 'Liberation Sans', sans-serif;color:#a4a6a7;transform:scaleX(0.8043);">7:2</span>
<span class="t" style="left:1022.50px;top:665px;font:400 10.5px/16px 'Liberation Sans', sans-serif;color:#a4a6a7;transform:scaleX(0.7749);">CRLF</span>
<span class="t" style="left:1054.25px;top:665px;font:400 10.5px/16px 'Liberation Sans', sans-serif;color:#a4a6a7;transform:scaleX(0.8655);">UTF-8</span>
<span class="t" style="left:1090.00px;top:665px;font:400 10.5px/16px 'Liberation Sans', sans-serif;color:#a4a6a7;transform:scaleX(0.8803);">4 spaces</span>
<span class="t" style="left:1137.50px;top:665px;font:400 10.5px/16px 'Liberation Sans', sans-serif;color:#a4a6a7;transform:scaleX(0.9386);">Python 3.11 (VideoDemo)</span>
<span class="t" style="left:488.00px;top:694px;font:400 11.3px/16px 'Liberation Sans', sans-serif;color:#5b5d5e;transform:scaleX(0.9554);">Search</span>
<span class="t" style="left:1091.75px;top:687px;font:400 9.6px/16px 'Liberation Sans', sans-serif;color:#1c1c1c;transform:scaleX(0.9016);">ENG</span>
<span class="t" style="left:1095.00px;top:700px;font:400 9.6px/16px 'Liberation Sans', sans-serif;color:#1c1c1c;transform:scaleX(0.9004);">US</span>
<span class="t" style="left:1207.50px;top:687px;font:400 9.6px/16px 'Liberation Sans', sans-serif;color:#1c1c1c;transform:scaleX(1.0311);">7:08 pm</span>
<span class="t" style="left:1192.50px;top:700px;font:400 9.6px/16px 'Liberation Sans', sans-serif;color:#1c1c1c;transform:scaleX(1.0569);">23/06/2023</span>
<span class="t" style="left:1254.30px;top:692px;font:400 8.5px/16px 'Liberation Sans', sans-serif;color:#ffffff;transform:scaleX(0.9927);">3</span>
<span class="t" style="left:3.04px;top:81.90px;font:400 10px/16px 'Liberation Sans', sans-serif;color:#dadada;transform:rotate(-90deg) scaleX(0.8562);">Project</span>
<span class="t" style="left:2.04px;top:546.25px;font:400 9.4px/16px 'Liberation Sans', sans-serif;color:#bbbbbb;transform:rotate(-90deg) scaleX(0.9002);">Structure</span>
<span class="t" style="left:2.04px;top:620.50px;font:400 9.4px/16px 'Liberation Sans', sans-serif;color:#bbbbbb;transform:rotate(-90deg) scaleX(0.8904);">Bookmarks</span>
<span class="t" style="left:1277.33px;top:72.40px;font:400 9.6px/16px 'Liberation Sans', sans-serif;color:#c6c6c6;transform:rotate(90deg) scaleX(0.9107);">Notifications</span>
</div>
</body>
</html>
